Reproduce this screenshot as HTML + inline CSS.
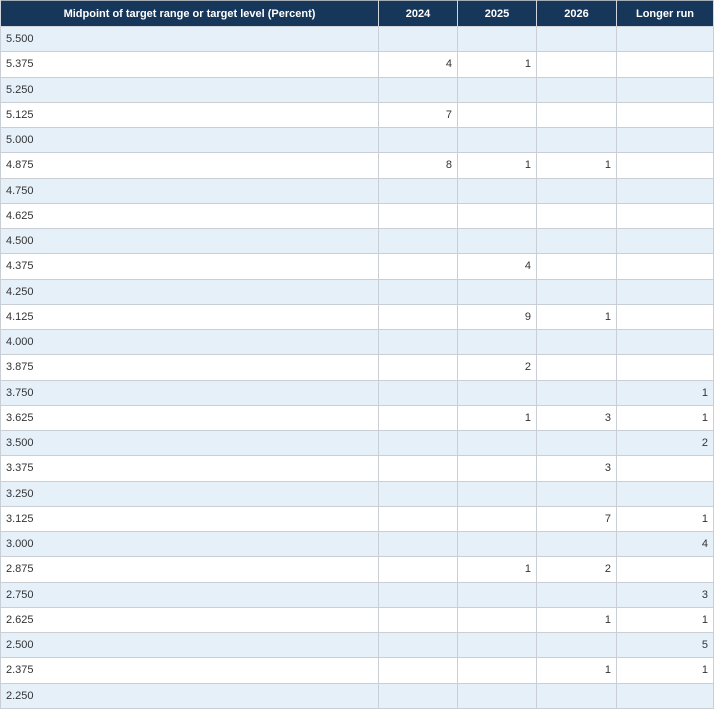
<!DOCTYPE html>
<html><head><style>
body{margin:0;background:#fff;}
table{position:absolute;left:0;top:0;width:713px;border-collapse:collapse;table-layout:fixed;font-family:"Liberation Sans",Arial,sans-serif;font-size:11px;color:#333;border:1px solid #a3acb5;}
th{background:#17375a;color:#fff;font-weight:bold;height:25px;padding:0;border:1px solid #d0d6dc;border-top:none;text-align:center;}
td{height:23.26px;line-height:13px;padding:1px 5px 0 5px;border:1px solid #c9cfd5;text-align:right;}
td:first-child{text-align:left;}
tr:nth-child(odd) td{background:#e6f0f9;}
</style></head><body>
<table>
<colgroup><col style="width:378px"><col style="width:79px"><col style="width:79px"><col style="width:80px"><col style="width:97px"></colgroup>
<thead><tr><th>Midpoint of target range or target level (Percent)</th><th>2024</th><th>2025</th><th>2026</th><th>Longer run</th></tr></thead>
<tbody>
<tr><td>5.500</td><td></td><td></td><td></td><td></td></tr>
<tr><td>5.375</td><td>4</td><td>1</td><td></td><td></td></tr>
<tr><td>5.250</td><td></td><td></td><td></td><td></td></tr>
<tr><td>5.125</td><td>7</td><td></td><td></td><td></td></tr>
<tr><td>5.000</td><td></td><td></td><td></td><td></td></tr>
<tr><td>4.875</td><td>8</td><td>1</td><td>1</td><td></td></tr>
<tr><td>4.750</td><td></td><td></td><td></td><td></td></tr>
<tr><td>4.625</td><td></td><td></td><td></td><td></td></tr>
<tr><td>4.500</td><td></td><td></td><td></td><td></td></tr>
<tr><td>4.375</td><td></td><td>4</td><td></td><td></td></tr>
<tr><td>4.250</td><td></td><td></td><td></td><td></td></tr>
<tr><td>4.125</td><td></td><td>9</td><td>1</td><td></td></tr>
<tr><td>4.000</td><td></td><td></td><td></td><td></td></tr>
<tr><td>3.875</td><td></td><td>2</td><td></td><td></td></tr>
<tr><td>3.750</td><td></td><td></td><td></td><td>1</td></tr>
<tr><td>3.625</td><td></td><td>1</td><td>3</td><td>1</td></tr>
<tr><td>3.500</td><td></td><td></td><td></td><td>2</td></tr>
<tr><td>3.375</td><td></td><td></td><td>3</td><td></td></tr>
<tr><td>3.250</td><td></td><td></td><td></td><td></td></tr>
<tr><td>3.125</td><td></td><td></td><td>7</td><td>1</td></tr>
<tr><td>3.000</td><td></td><td></td><td></td><td>4</td></tr>
<tr><td>2.875</td><td></td><td>1</td><td>2</td><td></td></tr>
<tr><td>2.750</td><td></td><td></td><td></td><td>3</td></tr>
<tr><td>2.625</td><td></td><td></td><td>1</td><td>1</td></tr>
<tr><td>2.500</td><td></td><td></td><td></td><td>5</td></tr>
<tr><td>2.375</td><td></td><td></td><td>1</td><td>1</td></tr>
<tr><td>2.250</td><td></td><td></td><td></td><td></td></tr>
</tbody></table>
</body></html>
